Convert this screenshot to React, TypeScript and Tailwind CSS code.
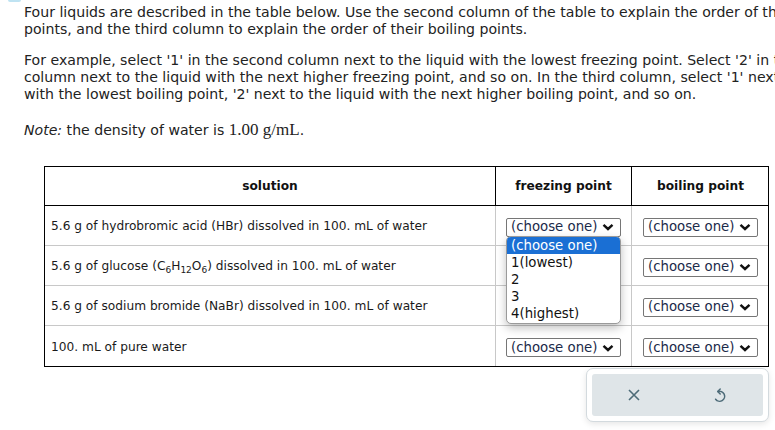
import React from "react";

const font = { fontFamily: '"DejaVu Sans", Verdana, sans-serif' };

function Chevron() {
  return (
    <svg width="12" height="8" viewBox="0 0 12 8" className="ml-[5px]">
      <path d="M1.5 1.8 L6 6 L10.5 1.8" fill="none" stroke="#111" strokeWidth="2.4" />
    </svg>
  );
}

function Choose() {
  return (
    <div className="flex h-[19px] w-[115px] items-center rounded-[2px] border border-[#767676] bg-white pl-[4px] text-[13.3px] leading-none text-[#1b2a4a]">
      <span>(choose one)</span>
      <Chevron />
    </div>
  );
}

function Row({ label, last, open }: { label: React.ReactNode; last?: boolean; open?: boolean }) {
  return (
    <div className={`grid grid-cols-[451px_136px_137px] h-[40px] ${last ? "" : "border-b border-[#c8c8c8]"}`}>
      <div className="flex items-center border-r border-[#c8c8c8] pl-[6px] pt-[2px] text-[12.2px] text-[#1a1a1a]">{label}</div>
      <div className="relative flex items-center justify-center border-r border-[#c8c8c8] pt-[3px]">
        <Choose />
        {open && (
          <div className="absolute left-[10px] top-[30px] z-10 w-[115px] overflow-hidden rounded-[5px] border border-[#9a9a9a] bg-white text-[13.3px] leading-[17px] text-[#111] shadow-[0_4px_10px_rgba(0,0,0,0.25)]">
            <div className="bg-[#1a6fd4] px-[4px] text-white">(choose one)</div>
            <div className="px-[4px]">1(lowest)</div>
            <div className="px-[4px]">2</div>
            <div className="px-[4px]">3</div>
            <div className="px-[4px] pb-[1px]">4(highest)</div>
          </div>
        )}
      </div>
      <div className="flex items-center justify-center pt-[3px]">
        <Choose />
      </div>
    </div>
  );
}

export default function App() {
  return (
    <div className="relative h-[430px] w-[775px] overflow-hidden bg-white text-[#222]" style={font}>
      <div className="absolute left-[8px] top-0 h-[2px] w-[13px] rounded-b bg-[#bfe3f2]" />
      <div className="w-[920px] pl-[24px] pt-[4px] text-[14.1px] leading-[17px]">
        <p>
          Four liquids are described in the table below. Use the second column of the table to explain the order of their freezing<br />
          points, and the third column to explain the order of their boiling points.
        </p>
        <p className="mt-[14px]">
          For example, select '1' in the second column next to the liquid with the lowest freezing point. Select '2' in the second<br />
          column next to the liquid with the next higher freezing point, and so on. In the third column, select '1' next to the liquid<br />
          with the lowest boiling point, '2' next to the liquid with the next higher boiling point, and so on.
        </p>
        <p className="mt-[18px]">
          <i>Note:</i> the density of water is{" "}
          <span className="text-[17px]" style={{ fontFamily: '"Liberation Serif", serif' }}>1.00 g/mL</span>.
        </p>
      </div>

      <div className="ml-[44px] mt-[27px] w-[725px] border-[1.5px] border-black">
        <div className="grid h-[39px] grid-cols-[451px_136px_137px] border-b-[1.5px] border-black text-[12.2px] font-bold text-[#111]">
          <div className="flex items-center justify-center border-r border-black">solution</div>
          <div className="flex items-center justify-center border-r border-black">freezing point</div>
          <div className="flex items-center justify-center">boiling point</div>
        </div>
        <Row label="5.6 g of hydrobromic acid (HBr) dissolved in 100. mL of water" open />
        <Row
          label={
            <span>
              5.6 g of glucose (C<sub className="text-[9px]">6</sub>H<sub className="text-[9px]">12</sub>O<sub className="text-[9px]">6</sub>) dissolved in 100. mL of water
            </span>
          }
        />
        <Row label="5.6 g of sodium bromide (NaBr) dissolved in 100. mL of water" />
        <Row label="100. mL of pure water" last />
      </div>

      <div className="ml-[586px] mt-[1px] w-[183px] rounded-[7px] border-[1.5px] border-[#d3dade] bg-white p-[5px] shadow-[0_2px_6px_rgba(0,0,0,0.1)]">
        <div className="flex h-[42px] items-center justify-around rounded-[3px] bg-[#dfe5e8]">
          <svg width="14" height="14" viewBox="0 0 14 14">
            <path d="M2 2 L12 12 M12 2 L2 12" stroke="#4d6b78" strokeWidth="1.6" fill="none" />
          </svg>
          <svg width="16" height="18" viewBox="0 0 16 18">
            <path d="M6 5.5 A5 5 0 1 1 3.6 13.2" stroke="#4d6b78" strokeWidth="1.5" fill="none" strokeLinecap="round" />
            <path d="M8.2 3 L5.7 5.5 L8.2 8" stroke="#4d6b78" strokeWidth="1.5" fill="none" strokeLinecap="round" strokeLinejoin="round" />
          </svg>
        </div>
      </div>
    </div>
  );
}
